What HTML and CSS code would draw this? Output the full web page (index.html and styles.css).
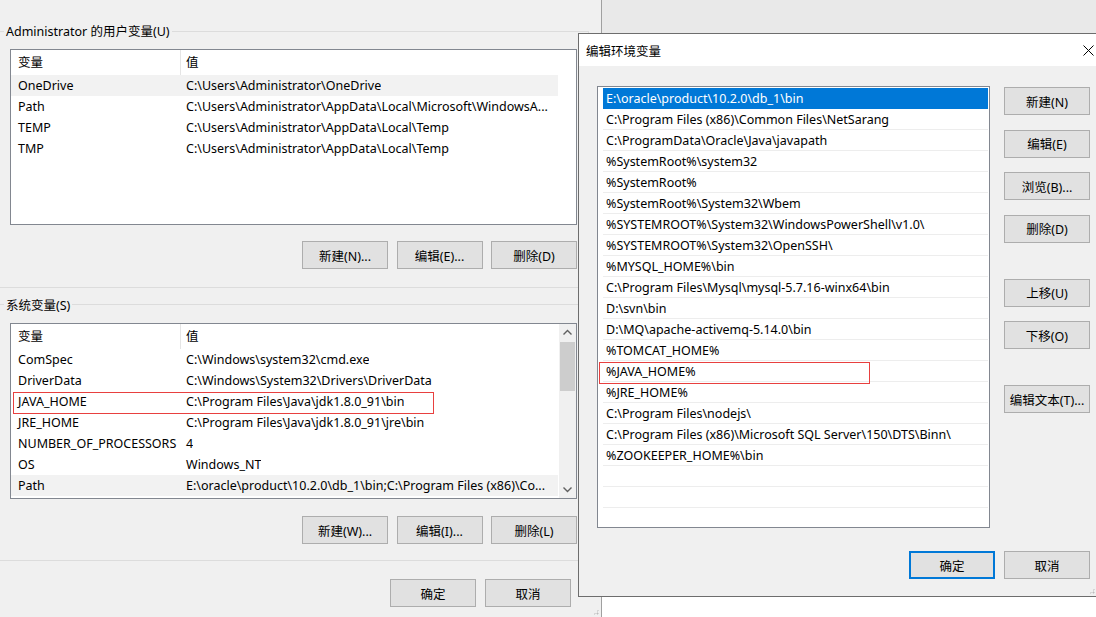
FILE: index.html
```html
<!DOCTYPE html>
<html>
<head>
  <meta charset="utf-8">
  <link rel="stylesheet" href="styles.css">
</head>
<body>
  <div class="env-window">
    <fieldset class="group">
      <legend>Administrator 的用户变量(U)</legend>
      <div class="listview">
        <div class="lv-table">
          <div class="lv-head"><span class="col-name">变量</span><span class="col-value">值</span></div>
          <div class="lv-row selected"><span class="col-name">OneDrive</span><span class="col-value">C:\Users\Administrator\OneDrive</span></div>
          <div class="lv-row"><span class="col-name">Path</span><span class="col-value">C:\Users\Administrator\AppData\Local\Microsoft\WindowsA...</span></div>
          <div class="lv-row"><span class="col-name">TEMP</span><span class="col-value">C:\Users\Administrator\AppData\Local\Temp</span></div>
          <div class="lv-row"><span class="col-name">TMP</span><span class="col-value">C:\Users\Administrator\AppData\Local\Temp</span></div>
        </div>
      </div>
      <div class="btn-row">
        <button class="btn">新建(N)...</button>
        <button class="btn">编辑(E)...</button>
        <button class="btn">删除(D)</button>
      </div>
    </fieldset>

    <fieldset class="group group-system">
      <legend>系统变量(S)</legend>
      <div class="listview">
        <div class="lv-table">
          <div class="lv-head"><span class="col-name">变量</span><span class="col-value">值</span></div>
          <div class="lv-row"><span class="col-name">ComSpec</span><span class="col-value">C:\Windows\system32\cmd.exe</span></div>
          <div class="lv-row"><span class="col-name">DriverData</span><span class="col-value">C:\Windows\System32\Drivers\DriverData</span></div>
          <div class="lv-row marked"><span class="col-name">JAVA_HOME</span><span class="col-value">C:\Program Files\Java\jdk1.8.0_91\bin</span><span class="mark mark-sys"></span></div>
          <div class="lv-row"><span class="col-name">JRE_HOME</span><span class="col-value">C:\Program Files\Java\jdk1.8.0_91\jre\bin</span></div>
          <div class="lv-row"><span class="col-name">NUMBER_OF_PROCESSORS</span><span class="col-value">4</span></div>
          <div class="lv-row"><span class="col-name">OS</span><span class="col-value">Windows_NT</span></div>
          <div class="lv-row selected"><span class="col-name">Path</span><span class="col-value">E:\oracle\product\10.2.0\db_1\bin;C:\Program Files (x86)\Co...</span></div>
        </div>
        <div class="scrollbar">
          <div class="sb-arrow">
            <svg width="17" height="17" viewBox="0 0 17 17"><polyline points="4.5,10.5 8.5,6.5 12.5,10.5" fill="none" stroke="#606060" stroke-width="1.4"/></svg>
          </div>
          <div class="sb-track"><div class="sb-thumb"></div></div>
          <div class="sb-arrow">
            <svg width="17" height="17" viewBox="0 0 17 17"><polyline points="4.5,6.5 8.5,10.5 12.5,6.5" fill="none" stroke="#606060" stroke-width="1.4"/></svg>
          </div>
        </div>
      </div>
      <div class="btn-row">
        <button class="btn">新建(W)...</button>
        <button class="btn">编辑(I)...</button>
        <button class="btn">删除(L)</button>
      </div>
    </fieldset>

    <div class="btn-row window-actions">
      <button class="btn">确定</button>
      <button class="btn">取消</button>
    </div>
    <span class="grip"></span>
  </div>

  <div class="edit-dialog">
    <div class="titlebar">
      <span>编辑环境变量</span>
      <svg class="close" width="11" height="11" viewBox="0 0 11 11">
        <path d="M0.5 0.5 L10.5 10.5 M10.5 0.5 L0.5 10.5" stroke="#000" stroke-width="1"/>
      </svg>
    </div>
    <div class="dialog-body">
      <div class="dialog-main">
        <div class="listbox">
          <div class="lb-item selected">E:\oracle\product\10.2.0\db_1\bin</div>
          <div class="lb-item">C:\Program Files (x86)\Common Files\NetSarang</div>
          <div class="lb-item">C:\ProgramData\Oracle\Java\javapath</div>
          <div class="lb-item">%SystemRoot%\system32</div>
          <div class="lb-item">%SystemRoot%</div>
          <div class="lb-item">%SystemRoot%\System32\Wbem</div>
          <div class="lb-item">%SYSTEMROOT%\System32\WindowsPowerShell\v1.0\</div>
          <div class="lb-item">%SYSTEMROOT%\System32\OpenSSH\</div>
          <div class="lb-item">%MYSQL_HOME%\bin</div>
          <div class="lb-item">C:\Program Files\Mysql\mysql-5.7.16-winx64\bin</div>
          <div class="lb-item">D:\svn\bin</div>
          <div class="lb-item">D:\MQ\apache-activemq-5.14.0\bin</div>
          <div class="lb-item">%TOMCAT_HOME%</div>
          <div class="lb-item marked">%JAVA_HOME%<span class="mark mark-path"></span></div>
          <div class="lb-item">%JRE_HOME%</div>
          <div class="lb-item">C:\Program Files\nodejs\</div>
          <div class="lb-item">C:\Program Files (x86)\Microsoft SQL Server\150\DTS\Binn\</div>
          <div class="lb-item">%ZOOKEEPER_HOME%\bin</div>
          <div class="lb-item"></div>
          <div class="lb-item"></div>
          <div class="lb-item"></div>
        </div>
        <div class="btn-col">
          <button class="btn">新建(N)</button>
          <button class="btn">编辑(E)</button>
          <button class="btn">浏览(B)...</button>
          <button class="btn">删除(D)</button>
          <button class="btn spaced">上移(U)</button>
          <button class="btn">下移(O)</button>
          <button class="btn spaced">编辑文本(T)...</button>
        </div>
      </div>
      <div class="btn-row dialog-actions">
        <button class="btn default">确定</button>
        <button class="btn">取消</button>
      </div>
    </div>
    <span class="grip"></span>
  </div>
</body>
</html>
```

FILE: styles.css
```css
body {
  margin: 0;
  width: 1096px;
  height: 617px;
  overflow: hidden;
  position: relative;
  background: linear-gradient(#e9e9e9 0, #e9e9e9 33px, #ffffff 33px);
  font-family: "Noto Sans", "Noto Sans CJK SC", sans-serif;
  font-size: 12.5px;
  color: #000;
}

/* left window: environment variables */
.env-window {
  position: relative;
  box-sizing: border-box;
  width: 602px;
  height: 617px;
  padding-top: 23px;
  background: #f0f0f0;
  border-right: 1px solid #a0a0a0;
}

.group {
  box-sizing: border-box;
  width: 589px;
  margin: 0;
  padding: 0 11px 18px 10px;
  border: 1px solid #dcdcdc;
  border-left: none;
}

.group legend {
  margin-left: -6px;
  padding: 1px 2px 0;
  line-height: 16px;
}

.group-system {
  margin-top: 8px;
  padding-bottom: 16px;
}

.group-system legend {
  padding-top: 2px;
  line-height: 15px;
}

.listview {
  display: flex;
  box-sizing: border-box;
  width: 567px;
  height: 176px;
  margin-top: 9px;
  background: #fff;
  border: 1px solid #828790;
}

.group-system .listview {
  margin-top: 10px;
}

.lv-table {
  width: 547px;
}

.lv-head,
.lv-row {
  position: relative;
  display: flex;
  white-space: nowrap;
}

.lv-head {
  height: 25px;
  line-height: 25px;
}

.lv-row {
  height: 21px;
  line-height: 21px;
}

.lv-row.selected {
  background: #f2f2f2;
}

.col-name {
  box-sizing: border-box;
  width: 170px;
  padding-left: 7px;
  overflow: hidden;
}

.lv-head .col-name {
  border-right: 1px solid #e5e5e5;
}

.col-value {
  padding-left: 5px;
  overflow: hidden;
}

.mark {
  position: absolute;
  border: 1px solid #e8403f;
  pointer-events: none;
}

.mark-sys {
  left: 2px;
  top: 1px;
  width: 419px;
  height: 20px;
}

.scrollbar {
  display: flex;
  flex-direction: column;
  width: 17px;
  margin-left: auto;
  background: #f0f0f0;
}

.sb-arrow {
  height: 17px;
}

.sb-arrow svg {
  display: block;
}

.sb-track {
  flex: 1;
  padding: 1px 1px 0;
}

.sb-thumb {
  height: 49px;
  background: #cdcdcd;
}

.btn-row {
  display: flex;
  justify-content: flex-end;
  gap: 8.5px;
  margin-top: 16px;
}

.group-system .btn-row {
  margin-top: 17px;
}

.btn {
  box-sizing: border-box;
  width: 86px;
  height: 28px;
  padding: 0;
  background: #e1e1e1;
  border: 1px solid #adadad;
  font: inherit;
  color: #000;
}

.window-actions {
  width: 571px;
  margin-top: 18px;
  gap: 9px;
}

.grip {
  position: absolute;
  right: 2px;
  bottom: 2px;
  width: 6px;
  height: 6px;
  background: radial-gradient(circle, #bcbcbc 0.9px, transparent 1.1px) 0 0 / 3px 3px;
  clip-path: polygon(100% 0, 100% 100%, 0 100%);
}

/* right dialog: edit environment variable */
.edit-dialog {
  position: absolute;
  left: 578px;
  top: 33px;
  box-sizing: border-box;
  width: 520px;
  height: 564px;
  background: #f0f0f0;
  border: 1px solid #6d6d6d;
}

.titlebar {
  display: flex;
  align-items: center;
  justify-content: space-between;
  height: 32px;
  padding: 0 0 0 7px;
  background: #fff;
}

.close {
  margin-right: 3px;
}

.dialog-body {
  width: 493px;
  padding: 20px 0 0 18px;
}

.dialog-main {
  display: flex;
  gap: 14px;
}

.listbox {
  box-sizing: border-box;
  width: 393px;
  height: 442px;
  padding: 1px 1px 0 5px;
  overflow: hidden;
  background: #fff;
  border: 1px solid #828790;
}

.lb-item {
  position: relative;
  box-sizing: border-box;
  height: 21px;
  padding-left: 3px;
  line-height: 21px;
  white-space: nowrap;
  border-bottom: 1px solid #ededed;
}

.lb-item.selected {
  background: #0078d7;
  border-bottom-color: #0078d7;
  color: #fff;
}

.mark-path {
  left: -4px;
  top: 1px;
  width: 269px;
  height: 20px;
}

.btn-col {
  display: flex;
  flex-direction: column;
  gap: 14.5px;
  padding-top: 1px;
}

.btn-col .spaced {
  margin-top: 21.5px;
}

.dialog-actions {
  margin-top: 23px;
  gap: 9px;
}

.btn.default {
  border: 2px solid #0078d7;
}
```
